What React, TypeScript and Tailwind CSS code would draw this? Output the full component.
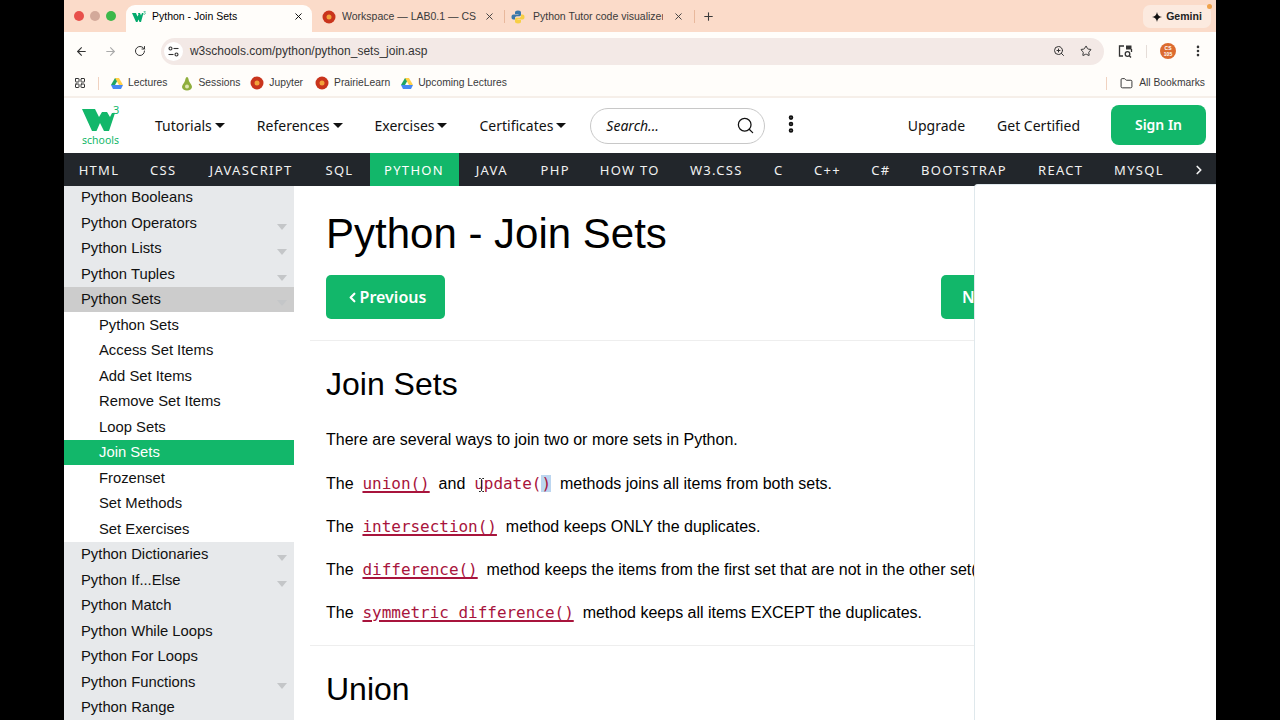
import { ArrowLeft, ArrowRight, RotateCw, X, Plus, Star, ZoomIn, EllipsisVertical, Folder, Search, ChevronRight, ChevronLeft, LayoutGrid } from "lucide-react";

const nav: { label: string; w: string }[] = [
  { label: "HTML", w: "w-[70px]" }, { label: "CSS", w: "w-[58.5px]" }, { label: "JAVASCRIPT", w: "w-[117px]" }, { label: "SQL", w: "w-[60px]" },
  { label: "PYTHON", w: "w-[89px] bg-[#12b76a] text-white" }, { label: "JAVA", w: "w-[66.5px]" }, { label: "PHP", w: "w-[60.5px]" }, { label: "HOW TO", w: "w-[88.5px]" },
  { label: "W3.CSS", w: "w-[84.5px]" }, { label: "C", w: "w-[40.5px]" }, { label: "C++", w: "w-[57px]" }, { label: "C#", w: "w-[49.5px]" },
  { label: "BOOTSTRAP", w: "w-[117px]" }, { label: "REACT", w: "w-[76.5px]" }, { label: "MYSQL", w: "w-[80px]" },
];

const sideTop: [string, boolean][] = [["Python Booleans", false], ["Python Operators", true], ["Python Lists", true], ["Python Tuples", true]];
const sideSub = ["Python Sets", "Access Set Items", "Add Set Items", "Remove Set Items", "Loop Sets", "Join Sets", "Frozenset", "Set Methods", "Set Exercises"];
const sideBottom: [string, boolean][] = [["Python Dictionaries", true], ["Python If...Else", true], ["Python Match", false], ["Python While Loops", false], ["Python For Loops", false], ["Python Functions", true], ["Python Range", false]];

function Favicon() {
  return (
    <svg width="14" height="14" viewBox="0 0 14 14" className="shrink-0">
      <circle cx="7" cy="7" r="6.500" fill="#c9341c" />
      <circle cx="7" cy="7" r="2.500" fill="#f2a23a" />
    </svg>
  );
}

function Drive() {
  return (
    <svg width="14" height="13" viewBox="0 0 14 13" className="shrink-0">
      <path d="M5 1h4l-4 7H1z" fill="#1fa463" />
      <path d="M9 1l4 7H9L5 1z" fill="#ffd04b" />
      <path d="M1 8h12l-2 4H3z" fill="#4688f4" />
    </svg>
  );
}

function Pear() {
  return (
    <svg width="12" height="15" viewBox="0 0 12 15" className="shrink-0">
      <path d="M6 1c1.500 0 1.500 3 2.500 5S11 9 11 11a5 3.500 0 0 1-10 0c0-2 1.500-3 2.500-5S4.500 1 6 1z" fill="#8fae3c" />
      <circle cx="6" cy="10.500" r="2" fill="#dfe6b0" />
    </svg>
  );
}

function PythonIcon() {
  return (
    <svg width="14" height="14" viewBox="0 0 14 14" className="shrink-0">
      <path d="M7 .5C4.500.5 4 1.500 4 2.500V4h3.500v.6H2.500C1 4.600.5 5.800.5 7s.5 2.500 2 2.500H4V8c0-1 .8-1.800 1.800-1.800h2.700C9.400 6.200 10 5.500 10 4.600V2.500C10 1.300 9 .5 7 .5z" fill="#3b78aa" />
      <path d="M7 13.500c2.500 0 3-1 3-2V10H6.500v-.6h5c1.500 0 2-1.200 2-2.400s-.5-2.500-2-2.500H10V6c0 1-.8 1.800-1.800 1.800H5.500C4.600 7.800 4 8.500 4 9.400v2.100c0 1.200 1 2 3 2z" fill="#f7cf45" />
    </svg>
  );
}

function W3Mini() {
  return (
    <svg width="14" height="12" viewBox="0 0 14 12" className="shrink-0">
      <path d="M0 2h4l1.500 3.500 1-2L6 2h2l1 2.500L10 2h1.500L9 11H7.500L6.500 8.500 5.500 11H4z" fill="#04aa6d" />
      <path d="M11.500.3h1.800l-.9 1c.7 0 1 .4 1 1 0 .7-.6 1.100-1.400 1.100l-.6-.2" fill="none" stroke="#04aa6d" strokeWidth=".6" />
    </svg>
  );
}

function SidePanelIcon() {
  return (
    <svg width="15" height="15" viewBox="0 0 15 15" fill="none" stroke="#333" strokeWidth="1.300" className="ml-[14px] shrink-0">
      <path d="M6 2H1.500v10H5" />
      <path d="M8 1.500h5.500v4H8z" fill="#333" stroke="none" />
      <path d="M13.500 5v3" />
      <circle cx="9.500" cy="10" r="2.300" />
      <path d="M11.300 11.800L13 13.500" />
    </svg>
  );
}

function Code({ children }: { children: string }) {
  return <span className="font-['DejaVu_Sans_Mono',monospace] text-[16px] tracking-[-0.03px] text-[#a8143c]">{children}</span>;
}

function LinkCode({ children }: { children: string }) {
  return <span className="font-['DejaVu_Sans_Mono',monospace] text-[16px] tracking-[-0.03px] text-[#a8143c] underline decoration-[1.500px] underline-offset-2">{children}</span>;
}

function SideItem({ label, arrow }: { label: string; arrow: boolean }) {
  return (
    <div className="h-[25.5px] pl-[17px] pr-[7px] flex items-center justify-between">
      <span>{label}</span>
      {arrow && <span className="mt-[8px] w-0 h-0 border-l-[5px] border-r-[5px] border-t-[6px] border-l-transparent border-r-transparent border-t-[#c4c6c8]" />}
    </div>
  );
}

function Caret() {
  return <span className="ml-[3px] w-0 h-0 border-l-[5px] border-r-[5px] border-t-[5px] border-l-transparent border-r-transparent border-t-[#111]" />;
}

export default function App() {
  return (
    <div className="w-[1280px] h-[720px] overflow-hidden bg-black flex justify-center font-['Liberation_Sans',sans-serif] text-black">
      <div className="w-[1152px] h-full flex flex-col bg-white">
        {/* tab strip */}
        <div className="h-[32px] shrink-0 bg-[#fbdbc9] flex items-end text-[10.5px] text-[#3a3a3a]">
          <div className="flex items-center gap-[6px] pl-[10px] w-[62px] h-full">
            <span className="w-[10px] h-[10px] rounded-full bg-[#e8504b]" />
            <span className="w-[10px] h-[10px] rounded-full bg-[#d3a99a]" />
            <span className="w-[10px] h-[10px] rounded-full bg-[#3cb84a]" />
          </div>
          <div className="w-[186px] h-[27px] bg-[#fffdfa] rounded-t-[9px] flex items-center pl-[6px] pr-[8px] pb-[4px] gap-[6px]">
            <W3Mini />
            <span className="flex-1 text-black">Python - Join Sets</span>
            <X size={11} strokeWidth={2} className="text-black" />
          </div>
          <div className="w-[193px] h-[27px] flex items-center pl-[10px] pb-[4px]">
            <Favicon />
            <span className="ml-[6px] w-[136px] whitespace-nowrap overflow-hidden">Workspace — LAB0.1 — CS 10</span>
            <X size={11} strokeWidth={2} className="ml-[6px]" />
            <span className="ml-[9px] w-px h-[13px] bg-[#e8b89c]" />
          </div>
          <div className="w-[191px] h-[27px] flex items-center pl-[6px] pb-[4px]">
            <PythonIcon />
            <span className="ml-[8px] w-[130px] whitespace-nowrap overflow-hidden">Python Tutor code visualizer:</span>
            <X size={11} strokeWidth={2} className="ml-[10px]" />
            <span className="ml-[10px] w-px h-[13px] bg-[#e8b89c]" />
          </div>
          <div className="h-[27px] flex items-center pl-[6px] pb-[4px]">
            <Plus size={13} strokeWidth={2} />
          </div>
          <div className="flex-1" />
          <div className="relative h-[23px] w-[68px] mb-[4px] mr-[5px] rounded-[7px] bg-[#fceadf] flex items-center justify-center gap-[4px] text-[10.5px] font-bold text-[#222]">
            <svg width="10" height="10" viewBox="0 0 10 10"><path d="M5 0c.5 3 2 4.500 5 5-3 .5-4.500 2-5 5-.5-3-2-4.500-5-5 3-.5 4.500-2 5-5z" fill="#111" /></svg>
            Gemini
            <span className="absolute right-[-1px] top-[-1px] w-[5px] h-[5px] rounded-full bg-[#f0a24a]" />
          </div>
        </div>

        {/* toolbar */}
        <div className="h-[37px] shrink-0 bg-[#fffdfa] flex items-center pl-[11px] pr-[11px] pt-[1px] rounded-t-[8px]">
          <ArrowLeft size={13} strokeWidth={2} className="text-[#333]" />
          <ArrowRight size={13} strokeWidth={2} className="ml-[16px] text-[#aaa]" />
          <RotateCw size={12} strokeWidth={2} className="ml-[17px] text-[#333]" />
          <div className="ml-[15px] w-[944px] h-[27px] rounded-full bg-[#f3e9e6] flex items-center pl-[3px] pr-[12px] text-[12px] text-[#333]">
            <span className="w-[19px] h-[19px] rounded-full bg-white flex items-center justify-center">
              <svg width="11" height="11" viewBox="0 0 11 11" fill="none" stroke="#333" strokeWidth="1.100">
                <circle cx="2.500" cy="2.500" r="1.500" />
                <path d="M5.500 2.500H10.500" />
                <circle cx="8.500" cy="8.500" r="1.500" />
                <path d="M.5 8.500H5.500" />
              </svg>
            </span>
            <span className="ml-[7px] flex-1">w3schools.com/python/python_sets_join.asp</span>
            <ZoomIn size={12} strokeWidth={2} className="text-[#333]" />
            <Star size={12} strokeWidth={2} className="ml-[15px] text-[#333]" />
          </div>
          <SidePanelIcon />
          <span className="ml-[13px] w-px h-[13px] bg-[#e5ddd8]" />
          <span className="ml-[13px] w-[16px] h-[16px] rounded-full bg-[#dc6b2f] text-white text-[5px] font-bold leading-[6px] text-center flex items-center justify-center">CS<br />105</span>
          <EllipsisVertical size={14} strokeWidth={2.500} className="ml-[15px] text-[#333]" />
        </div>

        {/* bookmarks */}
        <div className="h-[29px] shrink-0 bg-[#fffdfa] border-b-[2px] border-[#f6efe9] flex items-center pl-[10px] pr-[11px] pt-[1px] text-[10.3px] text-[#3a3a3a]">
          <LayoutGrid size={12} strokeWidth={2} className="text-[#333]" />
          <span className="ml-[12px] w-px h-[13px] bg-[#f0d2c0]" />
          <span className="ml-[11px] flex items-center gap-[4px]"><Drive />Lectures</span>
          <span className="ml-[13px] flex items-center gap-[6px]"><Pear />Sessions</span>
          <span className="ml-[10px] flex items-center gap-[5px]"><Favicon />Jupyter</span>
          <span className="ml-[12px] flex items-center gap-[5px]"><Favicon />PrairieLearn</span>
          <span className="ml-[10px] flex items-center gap-[4px]"><Drive />Upcoming Lectures</span>
          <span className="flex-1" />
          <span className="w-px h-[13px] bg-[#f0d2c0]" />
          <Folder size={13} strokeWidth={1.800} className="ml-[13px] text-[#333]" />
          <span className="ml-[6px]">All Bookmarks</span>
        </div>

        {/* w3schools header */}
        <div className="h-[55px] shrink-0 bg-white flex items-center pl-[18px] pr-[10px] font-['Noto_Sans',sans-serif] text-[14px] text-[#111]">
          <div className="w-[40px] flex flex-col items-start">
            <svg width="40" height="28" viewBox="0 0 40 28">
              <path d="M0 3H13L17 11 20 6H25L28 11 30 7H33L27 25H22L18 17 14.500 25H10Z" fill="#12b76a" />
              <text x="31" y="8" fontSize="11" fill="#12b76a" fontFamily="Noto Sans">3</text>
            </svg>
            <span className="text-[10.5px] leading-[10px] mt-[1px] text-[#12b76a]">schools</span>
          </div>
          <div className="ml-[33px] flex items-center"><span>Tutorials</span><Caret /></div>
          <div className="ml-[32px] flex items-center"><span>References</span><Caret /></div>
          <div className="ml-[32px] flex items-center"><span>Exercises</span><Caret /></div>
          <div className="ml-[32px] flex items-center"><span>Certificates</span><Caret /></div>
          <div className="ml-[24px] w-[175px] h-[36px] rounded-full border border-[#c8c8c8] flex items-center pl-[15px] pr-[9px] justify-between">
            <span className="italic">Search...</span>
            <Search size={19} strokeWidth={1.600} className="text-[#111]" />
          </div>
          <span className="ml-[15px] mb-[3px]"><EllipsisVertical size={22} strokeWidth={3} /></span>
          <span className="flex-1" />
          <span>Upgrade</span>
          <span className="ml-[32px]">Get Certified</span>
          <div className="ml-[31px] w-[95px] h-[40px] rounded-[8px] bg-[#12b76a] text-white font-semibold flex items-center justify-center mb-[1px] pb-[2px]">Sign In</div>
        </div>

        {/* subject nav */}
        <div className="relative z-10 h-[33px] shrink-0 bg-[#22262b] flex items-center font-['Noto_Sans',sans-serif] text-[13px] tracking-[1.3px] text-[#f1f1f1]">
          {nav.map((n) => (
            <div key={n.label} className={`h-full pt-[2px] flex items-center justify-center shrink-0 ${n.w}`}>{n.label}</div>
          ))}
          <span className="flex-1" />
          <ChevronRight size={14} strokeWidth={3} className="mr-[10px]" />
        </div>

        {/* body */}
        <div className="flex-1 flex min-h-0">
          <div className="w-[230px] shrink-0 bg-[#e7e9eb] text-[14.8px] text-[#111] -mt-[1.5px]">
            {sideTop.map(([l, a]) => <SideItem key={l} label={l} arrow={a} />)}
            <div className="bg-[#cccccc]"><SideItem label="Python Sets" arrow /></div>
            <div className="bg-white">
              {sideSub.map((s) => (
                <div key={s} className={s === "Join Sets" ? "h-[25.5px] pl-[35px] flex items-center bg-[#12b76a] text-white" : "h-[25.5px] pl-[35px] flex items-center"}>{s}</div>
              ))}
            </div>
            {sideBottom.map(([l, a]) => <SideItem key={l} label={l} arrow={a} />)}
          </div>

          <div className="w-[680px] shrink-0 overflow-hidden">
            <div className="w-[800px] pl-[32px] pr-[16px] text-[16px]">
              <h1 className="mt-[20px] text-[42px] leading-[56px]">Python - Join Sets</h1>
              <div className="mt-[13px] flex gap-[496px]">
                <div className="w-[119px] h-[44px] shrink-0 rounded-[5px] bg-[#12b76a] text-white font-['Noto_Sans',sans-serif] font-semibold text-[16px] flex items-center justify-center"><ChevronLeft size={15} strokeWidth={3.500} />Previous</div>
                <div className="w-[80px] h-[44px] shrink-0 rounded-[5px] bg-[#12b76a] text-white font-['Noto_Sans',sans-serif] font-semibold text-[16px] flex items-center pl-[21px]">Next</div>
              </div>
              <div className="-ml-[16px] mt-[21px] h-px bg-[#eeeeee]" />
              <h2 className="mt-[20px] text-[32px] leading-[46px]">Join Sets</h2>
              <p className="mt-[20px] h-[25px] leading-[25px]">There are several ways to join two or more sets in Python.</p>
              <p className="mt-[19px] h-[25px] leading-[25px] whitespace-nowrap">The &nbsp;<LinkCode>union()</LinkCode>&nbsp; and &nbsp;<span className="relative"><Code>update(</Code><span className="bg-[#bcd6f0]"><Code>)</Code></span><svg width="7" height="14" viewBox="0 0 7 14" fill="none" stroke="#222" strokeWidth="1" className="absolute left-[4px] top-[3px]"><path d="M1 .5h1.500L3.500 1.500 4.500.5H6M3.500 1.500v11M1 13.500h1.500l1-1 1 1H6" /></svg></span>&nbsp; methods joins all items from both sets.</p>
              <p className="mt-[18px] h-[25px] leading-[25px] whitespace-nowrap">The &nbsp;<LinkCode>intersection()</LinkCode>&nbsp; method keeps ONLY the duplicates.</p>
              <p className="mt-[18px] h-[25px] leading-[25px] whitespace-nowrap">The &nbsp;<LinkCode>difference()</LinkCode>&nbsp; method keeps the items from the first set that are not in the other set(s).</p>
              <p className="mt-[18px] h-[25px] leading-[25px] whitespace-nowrap">The &nbsp;<LinkCode>symmetric_difference()</LinkCode>&nbsp; method keeps all items EXCEPT the duplicates.</p>
              <div className="-ml-[16px] mt-[20px] h-px bg-[#eeeeee]" />
              <h2 className="mt-[20px] text-[32px] leading-[46px]">Union</h2>
            </div>
          </div>

          <div className="flex-1 -mt-[2px] bg-white border-l border-t border-[#dfe8ec] rounded-tl-[4px] relative z-20" />
        </div>
      </div>
    </div>
  );
}
